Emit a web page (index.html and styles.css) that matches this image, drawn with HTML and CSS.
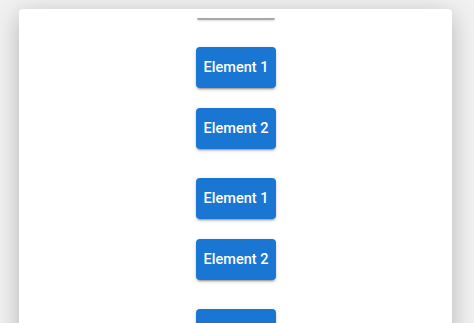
FILE: index.html
```html
<!DOCTYPE html>
<html>
<head>
<meta charset="utf-8">
<link rel="stylesheet" href="styles.css">
</head>
<body>
<div class="card">
  <div class="edge"></div>
  <div class="group">
    <button class="btn">Element 1</button>
    <button class="btn">Element 2</button>
  </div>
  <div class="group">
    <button class="btn">Element 1</button>
    <button class="btn">Element 2</button>
  </div>
  <div class="group">
    <button class="btn">Element 1</button>
    <button class="btn">Element 2</button>
  </div>
</div>
</body>
</html>
```
FILE: styles.css
```css
html, body {
  margin: 0;
  height: 100%;
}
body {
  background: #f1f1f1;
  overflow: hidden;
  padding-top: 9px;
  box-sizing: border-box;
  font-family: Roboto, "Liberation Sans", sans-serif;
}
.card {
  margin-left: 19px;
  width: 433px;
  height: 400px;
  background: #ffffff;
  border-radius: 4px 4px 0 0;
  box-shadow: 0 6px 24px rgba(0, 0, 0, 0.25);
  display: flex;
  flex-direction: column;
  align-items: center;
  padding-top: 9px;
  box-sizing: border-box;
}
.edge {
  flex: none;
  width: 78px;
  height: 2px;
  margin-bottom: 27px;
  background: #a8a8a8;
  border-radius: 0 0 2px 2px;
  box-shadow: 0 1px 2px rgba(0, 0, 0, 0.15);
}
.group {
  flex: none;
  display: flex;
  flex-direction: column;
  gap: 20px;
}
.group + .group {
  margin-top: 29px;
}
.btn {
  width: 80px;
  height: 41px;
  padding: 0 0 0 1px;
  border: none;
  border-radius: 4px;
  background: #1976d2;
  color: #ffffff;
  font-family: Roboto, "Liberation Sans", sans-serif;
  font-size: 14.5px;
  font-weight: 500;
  letter-spacing: 0;
  box-shadow: 0 3px 1px -2px rgba(0, 0, 0, 0.2), 0 2px 2px 0 rgba(0, 0, 0, 0.14), 0 1px 5px 0 rgba(0, 0, 0, 0.12);
}
```
